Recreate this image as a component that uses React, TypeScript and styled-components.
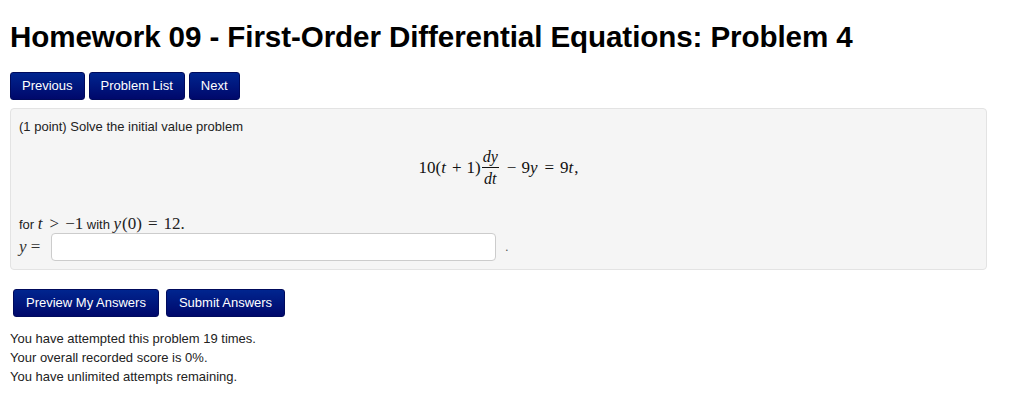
import React from 'react';
import styled, { createGlobalStyle } from 'styled-components';

const GlobalStyle = createGlobalStyle`
  html, body {
    margin: 0;
    padding: 0;
    background: #ffffff;
  }
  body {
    font-family: 'Liberation Sans', Arial, sans-serif;
    color: #222222;
  }
`;

const Page = styled.div`
  padding: 0 10px;
  width: 977px;
`;

const Title = styled.h1`
  margin: 0;
  padding-top: 20px;
  font-size: 29.6px;
  line-height: 34px;
  font-weight: 700;
  color: #000000;
  letter-spacing: -0.1px;
`;

const NavRow = styled.div`
  display: flex;
  gap: 4px;
  margin-top: 18px;
`;

const NavyButton = styled.button<{ $wide?: boolean }>`
  font-family: 'Liberation Sans', Arial, sans-serif;
  font-size: 13px;
  line-height: 16px;
  color: #ffffff;
  background: linear-gradient(#00258f, #00086b);
  border: 1px solid #000a5c;
  border-radius: 3px;
  height: 28px;
  padding: 0 ${(p) => (p.$wide ? 12 : 11)}px;
  cursor: pointer;
`;

const ProblemBox = styled.div`
  margin-top: 8px;
  background: #f5f5f5;
  border: 1px solid #e3e3e3;
  border-radius: 4px;
  padding: 9px 8px 8px;
  font-size: 13px;
  line-height: 18px;
  box-sizing: border-box;
  height: 162px;
`;

const Display = styled.div`
  display: flex;
  justify-content: center;
  align-items: center;
  margin: 11px 0 27px;
  font-family: 'Liberation Serif', 'Times New Roman', serif;
  font-size: 17px;
  color: #111;
`;

const Frac = styled.span`
  display: inline-flex;
  flex-direction: column;
  align-items: center;
  margin: 0 3px 0 1px;
  font-family: 'Liberation Serif', 'Times New Roman', serif;
  font-style: italic;
  font-size: 16px;
  line-height: 19px;
`;

const Numer = styled.span`
  border-bottom: 1px solid #111;
  padding: 0 1px 1px;
`;

const Denom = styled.span`
  padding-top: 1px;
`;

const Mi = styled.i`
  font-family: 'Liberation Serif', 'Times New Roman', serif;
  font-style: italic;
  font-size: 17px;
  margin-right: 1px;
`;

const Mn = styled.span`
  font-family: 'Liberation Serif', 'Times New Roman', serif;
  font-size: 17px;
`;

const Op = styled.span<{ $rel?: boolean }>`
  font-family: 'Liberation Serif', 'Times New Roman', serif;
  font-size: 17px;
  margin: 0 ${(p) => (p.$rel ? 6 : 5)}px;
`;

const Condition = styled.div`
  line-height: 17px;
`;

const AnswerRow = styled.div`
  display: flex;
  align-items: center;
  gap: 6px;
  margin-top: 0;
`;

const AnswerLabel = styled.span`
  font-family: 'Liberation Serif', 'Times New Roman', serif;
  font-size: 17px;
  color: #333;
  width: 26px;
`;

const AnswerInput = styled.input`
  width: 445px;
  height: 28px;
  box-sizing: border-box;
  border: 1px solid #cccccc;
  border-radius: 4px;
  background: #ffffff;
  padding: 4px 6px;
  font-size: 13px;
`;

const Period = styled.span`
  margin-left: 3px;
  color: #555;
`;

const SubmitRow = styled.div`
  display: flex;
  gap: 7px;
  margin: 19px 0 0 3px;
`;

const Stats = styled.div`
  margin-top: 12px;
  font-size: 13px;
  line-height: 19px;
  color: #222;
`;

export default function App() {
  return (
    <>
      <GlobalStyle />
      <Page>
        <Title>Homework 09 - First-Order Differential Equations: Problem 4</Title>
        <NavRow>
          <NavyButton>Previous</NavyButton>
          <NavyButton>Problem List</NavyButton>
          <NavyButton>Next</NavyButton>
        </NavRow>
        <ProblemBox>
          <div>(1 point) Solve the initial value problem</div>
          <Display>
            <Mn>10(</Mn>
            <Mi>t</Mi>
            <Op>+</Op>
            <Mn>1)</Mn>
            <Frac>
              <Numer>dy</Numer>
              <Denom>dt</Denom>
            </Frac>
            <Op>−</Op>
            <Mn>9</Mn>
            <Mi>y</Mi>
            <Op $rel>=</Op>
            <Mn>9</Mn>
            <Mi>t</Mi>
            <Mn>,</Mn>
          </Display>
          <Condition>
            for <Mi>t</Mi>
            <Op $rel>&gt;</Op>
            <Mn>−1</Mn> with <Mi>y</Mi>
            <Mn>(0)</Mn>
            <Op $rel>=</Op>
            <Mn>12.</Mn>
          </Condition>
          <AnswerRow>
            <AnswerLabel>
              <i>y</i> =
            </AnswerLabel>
            <AnswerInput aria-label="answer" />
            <Period>.</Period>
          </AnswerRow>
        </ProblemBox>
        <SubmitRow>
          <NavyButton $wide>Preview My Answers</NavyButton>
          <NavyButton $wide>Submit Answers</NavyButton>
        </SubmitRow>
        <Stats>
          You have attempted this problem 19 times.
          <br />
          Your overall recorded score is 0%.
          <br />
          You have unlimited attempts remaining.
        </Stats>
      </Page>
    </>
  );
}
